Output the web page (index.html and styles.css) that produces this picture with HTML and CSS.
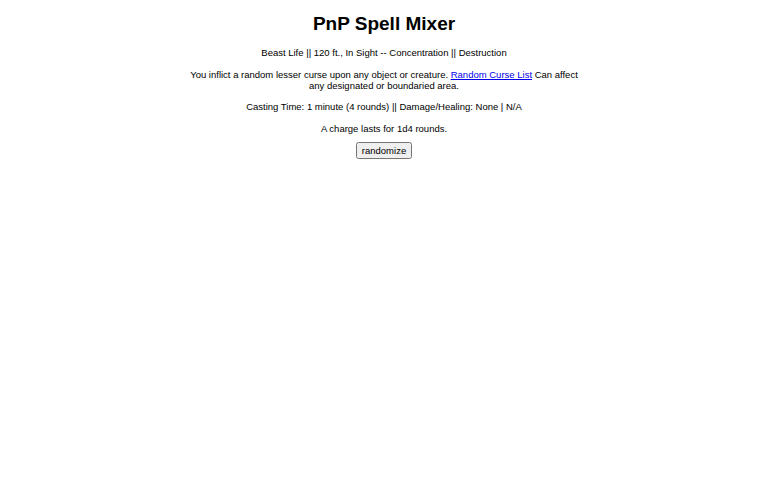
FILE: index.html
```html
<!DOCTYPE html>
<html lang="en">

<head>
    <meta charset="UTF-8">
    <meta name="viewport" content="width=device-width, initial-scale=1.0">
    <title>PnP Spell Mixer</title>
    <link rel="stylesheet" href="styles.css">
</head>

<body>
    <div class="container">
        <h1>PnP Spell Mixer</h1>
        <p id="header">Beast Life || 120 ft., In Sight -- Concentration || Destruction</p>
        <p id="effect">You inflict a random lesser curse upon any object or creature. <a href="#">Random Curse List</a> Can affect any designated or boundaried area.</p>
        <p id="timing">Casting Time: 1 minute (4 rounds) || Damage/Healing: None | N/A</p>
        <p id="charges">A charge lasts for 1d4 rounds.</p>
        <button id="randomizeButton">randomize</button>
    </div>
</body>

</html>
```

FILE: styles.css
```css
* {
    margin: 0;
    padding: 0;
    box-sizing: border-box;
}

body {
    font-family: "Liberation Sans", Arial, sans-serif;
    font-size: 9.5px;
    color: #000;
    background: #fff;
}

.container {
    width: 400px;
    margin: 0 auto;
    padding-top: 13px;
    text-align: center;
}

h1 {
    font-size: 19px;
    line-height: 22px;
    margin-bottom: 12px;
}

p {
    line-height: 11px;
    margin-bottom: 11px;
}

#effect {
    margin-bottom: 10px;
}

#charges {
    margin-bottom: 8px;
}

a {
    color: #00e;
}

#randomizeButton {
    font-family: "Liberation Sans", Arial, sans-serif;
    font-size: 9.5px;
    padding: 1px 4px;
}
```
